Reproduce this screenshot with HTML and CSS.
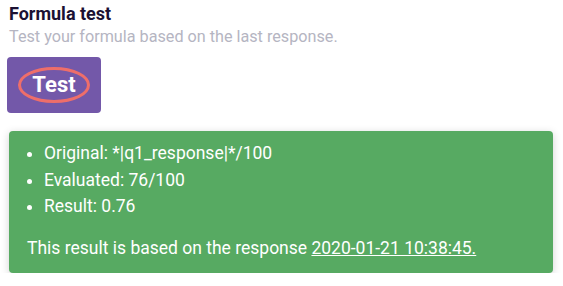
FILE: index.html
```html
<!DOCTYPE html>
<html lang="en">
<head>
    <meta charset="UTF-8">
    <meta name="viewport" content="width=device-width, initial-scale=1.0">
    <title>Formula test</title>
    <link rel="stylesheet" href="styles.css">
</head>
<body>
    <div class="formula-test">
        <h3 class="title">Formula test</h3>
        <p class="subtitle">Test your formula based on the last response.</p>

        <button class="test-btn">
            <span class="circled">Test</span>
        </button>

        <div class="result">
            <ul>
                <li>Original: *|q1_response|*/100</li>
                <li>Evaluated: 76/100</li>
                <li>Result: 0.76</li>
            </ul>
            <p>This result is based on the response <a href="#">2020-01-21 10:38:45.</a></p>
        </div>
    </div>
</body>
</html>
```

FILE: styles.css
```css
body {
    margin: 0;
    background-color: #fff;
    font-family: Roboto, "Liberation Sans", sans-serif;
}

.formula-test {
    padding: 3px 10px 0 9px;
}

.title {
    margin: 0;
    font-size: 18px;
    font-weight: 700;
    line-height: 22px;
    color: #1b1133;
}

.subtitle {
    margin: 0;
    font-size: 16.2px;
    line-height: 24px;
    color: #b5b5c2;
}

.test-btn {
    margin: 8px 0 0 -2px;
    width: 94px;
    height: 56px;
    display: flex;
    align-items: center;
    justify-content: center;
    background-color: #7358a9;
    border: none;
    border-radius: 4px;
    color: #fff;
    font-family: inherit;
    font-size: 22px;
    font-weight: 700;
    cursor: pointer;
}

.circled {
    padding: 3px 11px;
    border: 3px solid #ee6e6a;
    border-radius: 50%;
    line-height: 24px;
}

.result {
    margin-top: 18px;
    padding: 9px 18px 12px;
    background-color: #57aa62;
    border-radius: 4px;
    box-shadow: 0 2px 8px rgba(0, 0, 0, 0.18);
    color: #fff;
    font-size: 17.5px;
    line-height: 26.5px;
}

.result ul {
    margin: 0;
    padding-left: 17px;
}

.result p {
    margin: 15px 0 0;
}

.result a {
    color: #fff;
}
```
